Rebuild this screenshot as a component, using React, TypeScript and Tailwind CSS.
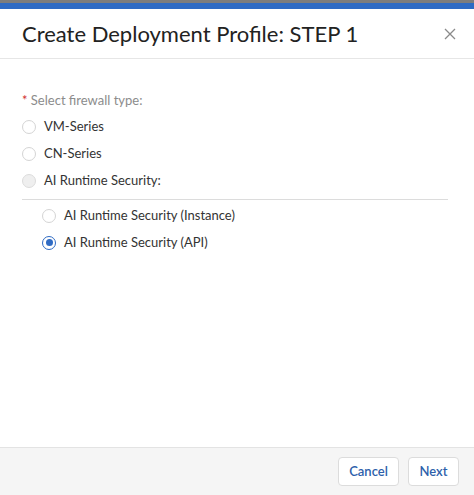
import React from 'react'

function Radio({ checked = false, disabled = false }: { checked?: boolean; disabled?: boolean }) {
  return (
    <span
      className={
        'flex h-[14px] w-[14px] shrink-0 items-center justify-center rounded-full border ' +
        (checked
          ? 'border-[#2f6bc4] bg-white'
          : disabled
            ? 'border-[#dcdcdc] bg-[#efefef]'
            : 'border-[#d4d4d4] bg-white')
      }
    >
      {checked && <span className="h-[7px] w-[7px] rounded-full bg-[#2f6bc4]" />}
    </span>
  )
}

function Option({ label, checked, disabled }: { label: string; checked?: boolean; disabled?: boolean }) {
  return (
    <label className="flex h-[27px] items-center gap-[8px] text-[13px] text-[#333]">
      <Radio checked={checked} disabled={disabled} />
      <span>{label}</span>
    </label>
  )
}

export default function App() {
  return (
    <div className="flex h-[495px] w-[474px] flex-col bg-white font-['Lato','Open_Sans',sans-serif]">
      {/* top bars */}
      <div className="h-[3px] bg-[#7d7d7d]" />
      <div className="h-[6px] bg-[#2f6bc4]" />

      {/* header */}
      <div className="flex h-[50px] items-center justify-between border-b border-[#e6e6e6] pl-[22px] pr-[18px]">
        <h1 className="text-[22px] leading-none text-[#222]">Create Deployment Profile: STEP 1</h1>
        <svg width="12" height="12" viewBox="0 0 12 12" className="text-[#8a8a8a]">
          <path d="M1 1L11 11M11 1L1 11" stroke="currentColor" strokeWidth="1.3" />
        </svg>
      </div>

      {/* body */}
      <main className="flex-grow px-[22px] pt-[31px]">
        <div className="mb-[3px] text-[13px] leading-[20px] text-[#8c8c8c]">
          <span className="text-[#d0302f]">* </span>Select firewall type:
        </div>
        <Option label="VM-Series" />
        <Option label="CN-Series" />
        <Option label="AI Runtime Security:" disabled />
        <div className="mr-[4px] mt-[5px] border-t border-[#dcdcdc] pl-[20px] pt-[2px]">
          <Option label="AI Runtime Security (Instance)" />
          <Option label="AI Runtime Security (API)" checked />
        </div>
      </main>

      {/* footer */}
      <div className="flex h-[48px] items-center justify-end gap-[9px] border-t border-[#e3e3e3] bg-[#f5f5f5] pr-[15px]">
        <button className="h-[29px] w-[61px] rounded-[4px] border border-[#dcdcdc] bg-white text-[13px] font-semibold text-[#2d5fab]">
          Cancel
        </button>
        <button className="h-[29px] w-[51px] rounded-[4px] border border-[#dcdcdc] bg-white text-[13px] font-semibold text-[#2d5fab]">
          Next
        </button>
      </div>
    </div>
  )
}
